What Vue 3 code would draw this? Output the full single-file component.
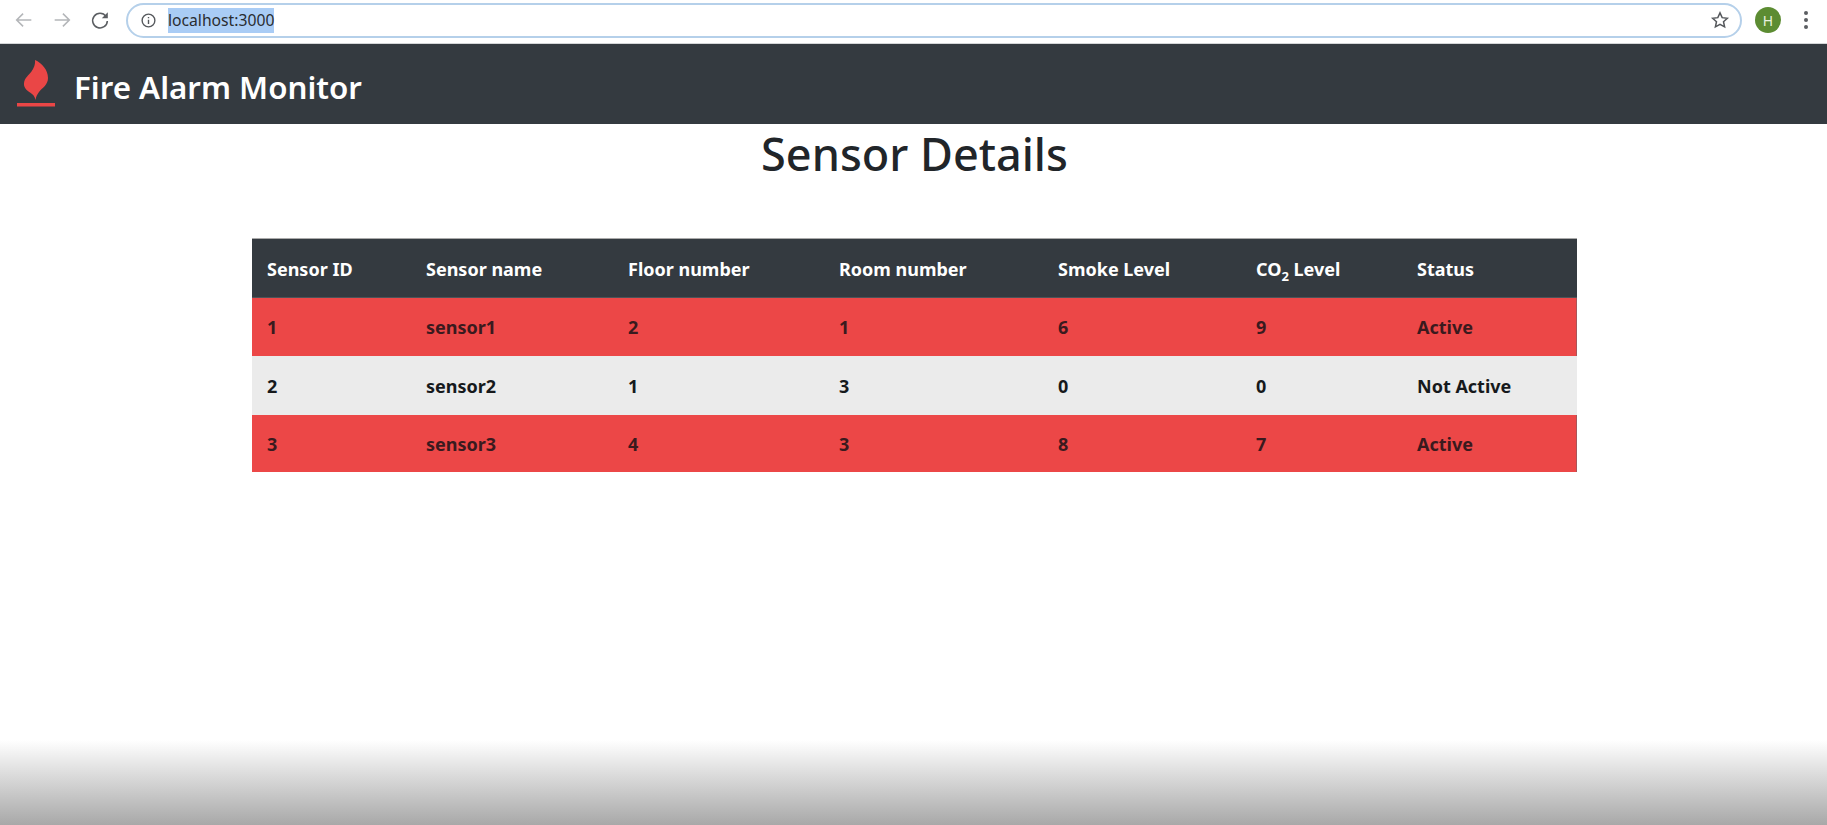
<script setup>
const columns = ['Sensor ID', 'Sensor name', 'Floor number', 'Room number', 'Smoke Level', 'CO2', 'Status']
const widths = [159, 202, 211, 219, 198, 161, 175]
const rows = [
  { id: 1, name: 'sensor1', floor: 2, room: 1, smoke: 6, co2: 9, status: 'Active' },
  { id: 2, name: 'sensor2', floor: 1, room: 3, smoke: 0, co2: 0, status: 'Not Active' },
  { id: 3, name: 'sensor3', floor: 4, room: 3, smoke: 8, co2: 7, status: 'Active' }
]
</script>

<template>
  <div class="page">
    <header class="chrome">
      <svg class="nav-icon" viewBox="0 0 24 24"><path d="M20 12H5M11 5l-7 7 7 7" /></svg>
      <svg class="nav-icon forward" viewBox="0 0 24 24"><path d="M4 12h15M13 5l7 7-7 7" /></svg>
      <svg class="nav-icon reload" viewBox="0 0 24 24"><path d="M18.5 8A8 8 0 1 0 20 13" /><path class="fill" d="M20.5 3.5v6.5H14z" /></svg>
      <div class="omnibox">
        <svg class="info" viewBox="0 0 16 16"><circle cx="8" cy="8" r="6" /><path d="M8 7.2v4M8 4.6v1.3" /></svg>
        <span class="url">localhost:3000</span>
        <svg class="star" viewBox="0 0 24 24"><path d="M12 3.5l2.6 5.7 6.2.7-4.6 4.2 1.3 6.1L12 17.1l-5.5 3.1 1.3-6.1-4.6-4.2 6.2-.7z" /></svg>
      </div>
      <div class="avatar">H</div>
      <div class="menu"><i></i><i></i><i></i></div>
    </header>

    <nav class="navbar">
      <svg class="logo" viewBox="0 0 38 50">
        <path d="M18 1C25 4 31 11 31 19C31 26 25 29 22 33C20 35.500 19 38 18.500 41C17.800 37 16 35.500 13 33.500C9 31 6.500 28 7 24C7.500 19 12 16 14.500 12.500C16.500 9.500 18.500 6 18 1z" />
        <rect x="0" y="44" width="38" height="3.5" />
      </svg>
      <span class="brand">Fire Alarm Monitor</span>
    </nav>

    <main class="content">
      <h1 class="title">Sensor Details</h1>
      <table class="sensors">
        <colgroup>
          <col v-for="(w, i) in widths" :key="i" :style="{ width: w + 'px' }" />
        </colgroup>
        <thead>
          <tr>
            <th v-for="c in columns" :key="c">
              <template v-if="c === 'CO2'">CO<sub>2</sub> Level</template>
              <template v-else>{{ c }}</template>
            </th>
          </tr>
        </thead>
        <tbody>
          <tr v-for="r in rows" :key="r.id" :class="{ active: r.status === 'Active' }">
            <td>{{ r.id }}</td>
            <td>{{ r.name }}</td>
            <td>{{ r.floor }}</td>
            <td>{{ r.room }}</td>
            <td>{{ r.smoke }}</td>
            <td>{{ r.co2 }}</td>
            <td>{{ r.status }}</td>
          </tr>
        </tbody>
      </table>
    </main>

    <div class="shade"></div>
  </div>
</template>

<style>
html, body { margin: 0; background: #fff; overflow: hidden; }
</style>

<style scoped>
.page {
  width: 1827px;
  height: 825px;
  display: flex;
  flex-direction: column;
  font-family: "Noto Sans", "Open Sans", sans-serif;
  color: #212529;
  position: relative;
  overflow: hidden;
}
.chrome {
  height: 44px;
  flex: none;
  display: flex;
  align-items: center;
  padding: 0 0 3px 13px;
  background: #fff;
  border-bottom: 1px solid #d4d6d8;
  box-sizing: border-box;
}
.nav-icon { width: 22px; height: 22px; flex: none; margin-right: 16px; fill: none; stroke: #b4b6b9; stroke-width: 1.7; }
.nav-icon.forward { margin-right: 16px; }
.nav-icon.reload { stroke: #5b5e62; margin-right: 15px; }
.nav-icon .fill { fill: #5b5e62; stroke: none; }
.omnibox {
  flex: 1;
  height: 35px;
  box-sizing: border-box;
  border: 2px solid #b5d0ea;
  border-radius: 18px;
  display: flex;
  align-items: center;
  padding: 0 10px 0 12px;
}
.info { width: 17px; height: 17px; fill: none; stroke: #55585c; stroke-width: 1.3; margin-right: 11px; }
.url {
  background: #a9ccf5;
  color: #2a2d30;
  font-size: 15.7px;
  line-height: 25px;
  flex: none;
}
.star { width: 20px; height: 20px; margin-left: auto; fill: none; stroke: #55585c; stroke-width: 1.8; }
.avatar {
  width: 26px;
  height: 26px;
  margin-left: 13px;
  border-radius: 50%;
  background: #5c8c32;
  color: #e8f0df;
  font-size: 14px;
  display: flex;
  align-items: center;
  justify-content: center;
  flex: none;
}
.menu { width: 4px; display: flex; flex-direction: column; gap: 3px; margin: 0 19px 0 23px; flex: none; }
.menu i { width: 4px; height: 4px; border-radius: 50%; background: #5b5e62; }

.navbar {
  height: 80px;
  flex: none;
  display: flex;
  align-items: center;
  background: #343a40;
  padding-left: 17px;
}
.logo { width: 38px; height: 50px; fill: #ea4646; margin-right: 19px; flex: none; }
.brand { color: #fff; font-size: 31.3px; font-weight: 600; line-height: 40px; padding-top: 6px; }

.content { display: flex; flex-direction: column; align-items: center; padding-left: 2px; }
.title {
  margin: 0;
  padding-top: 1px;
  font-size: 45px;
  font-weight: 500;
  line-height: 58px;
  color: #212529;
}
.sensors {
  margin-top: 55px;
  width: 1325px;
  table-layout: fixed;
  border-collapse: collapse;
  font-size: 18px;
  font-weight: 700;
  text-align: left;
}
th {
  background: #343a40;
  color: #fff;
  height: 59px;
  padding: 1px 0 0 15px;
  font-weight: 700;
  box-sizing: border-box;
  border-top: 1px solid #aaa;
  border-bottom: 1px solid #4d5359;
}
sub { font-size: 13px; line-height: 0; }
td {
  height: 59px;
  padding: 1px 0 0 15px;
  box-sizing: border-box;
  background: #ebebeb;
  color: #16191c;
}
tr.active td { background: #ec4747; color: #3a1a1e; height: 58px; }
tr.active:last-child td { height: 57px; }
tr.active td:last-child { box-shadow: inset -1px 0 0 #a8565a; }

.shade {
  position: absolute;
  left: 0;
  right: 0;
  bottom: 0;
  height: 85px;
  background: linear-gradient(to bottom, rgba(170,170,170,0), #a8a8a8);
  pointer-events: none;
}
</style>
